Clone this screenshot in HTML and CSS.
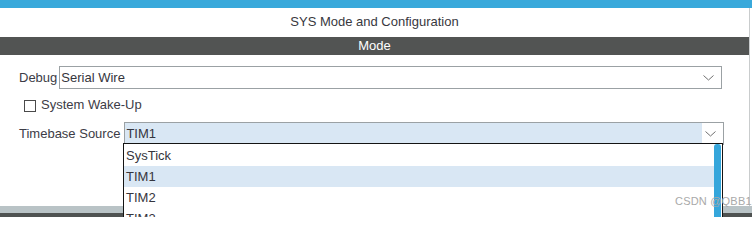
FILE: index.html
```html
<!DOCTYPE html>
<html>
<head>
<meta charset="utf-8">
<link rel="stylesheet" href="styles.css">
</head>
<body>
<div class="topbar"></div>
<div class="panel">
  <div class="title">SYS Mode and Configuration</div>
  <div class="modebar">Mode</div>
  <div class="form">
    <div class="row row-debug">
      <span class="label">Debug</span>
      <div class="select select-debug">
        <span class="value">Serial Wire</span>
        <span class="arrow"><svg width="11" height="6" viewBox="0 0 11 6"><path d="M0.5 0.5 L5.5 5 L10.5 0.5" fill="none" stroke="#707070" stroke-width="1"/></svg></span>
      </div>
    </div>
    <div class="row row-check">
      <span class="checkbox"></span>
      <span class="check-label">System Wake-Up</span>
    </div>
    <div class="row row-time">
      <span class="label">Timebase Source</span>
      <div class="select select-time">
        <span class="value">TIM1</span>
        <span class="arrow arrow-white"><svg width="11" height="6" viewBox="0 0 11 6"><path d="M0.5 0.5 L5.5 5 L10.5 0.5" fill="none" stroke="#707070" stroke-width="1"/></svg></span>
      </div>
    </div>
  </div>
</div>
<div class="bottom">
  <div class="band-light"></div>
  <div class="band-dark"></div>
</div>
<div class="dropdown">
  <div class="items">
    <div class="item">SysTick</div>
    <div class="item selected">TIM1</div>
    <div class="item">TIM2</div>
    <div class="item">TIM3</div>
  </div>
  <div class="scrollbar"></div>
</div>
<div class="watermark">CSDN @QBB1</div>
</body>
</html>
```
FILE: styles.css
```css
html, body {
  margin: 0;
  padding: 0;
  width: 752px;
  height: 217px;
  overflow: hidden;
  background: #ffffff;
  font-family: "Liberation Sans", Arial, sans-serif;
  font-size: 13px;
  color: #3c3c46;
}
body {
  position: relative;
}
.topbar {
  height: 8px;
  background: #39a9db;
}
.panel {
  width: 749px;
  height: 198px;
  border-right: 1px solid #c9cccd;
}
.title {
  height: 29px;
  line-height: 28px;
  text-align: center;
  color: #38383e;
}
.modebar {
  height: 18px;
  line-height: 18px;
  background: #525453;
  color: #ffffff;
  text-align: center;
}
.form {
  padding-left: 19px;
  padding-top: 11px;
}
.row {
  display: flex;
  align-items: center;
}
.row-debug {
  height: 22px;
}
.label {
  white-space: nowrap;
}
.select {
  box-sizing: border-box;
  height: 23px;
  border: 1px solid #9ba1a4;
  display: flex;
  align-items: center;
  justify-content: space-between;
  background: #ffffff;
}
.select-debug {
  margin-left: 2px;
  width: 663px;
}
.select-time {
  margin-left: 4px;
  width: 600px;
  background: #d9e7f4;
}
.value {
  padding-left: 1px;
  color: #35353d;
}
.arrow {
  width: 21px;
  height: 21px;
  display: flex;
  align-items: center;
  justify-content: center;
  padding-right: 4px;
  box-sizing: border-box;
}
.arrow svg {
  display: block;
  margin-top: 1px;
}
.arrow-white {
  background: #ffffff;
}
.row-check {
  height: 12px;
  margin-top: 12px;
  padding-left: 5px;
}
.checkbox {
  box-sizing: border-box;
  width: 12px;
  height: 12px;
  border: 1px solid #4a4a4a;
  background: #ffffff;
}
.check-label {
  margin-left: 5px;
  margin-top: -4px;
}
.row-time {
  margin-top: 10px;
  height: 23px;
}
.bottom {
  width: 752px;
}
.band-light {
  height: 7px;
  background: #b9c3c6;
}
.band-dark {
  height: 4px;
  background: #4f5251;
}
.dropdown {
  position: absolute;
  left: 123px;
  top: 143px;
  width: 600px;
  height: 74px;
  overflow: hidden;
  box-sizing: border-box;
  border: 1px solid #141414;
  border-bottom: none;
  background: #ffffff;
  display: flex;
}
.items {
  flex: 1;
  padding-top: 1px;
}
.item {
  height: 21px;
  line-height: 21px;
  padding-left: 2px;
  color: #35353d;
}
.item.selected {
  background: #d9e7f4;
}
.scrollbar {
  width: 7px;
  margin-right: 1px;
  background: #35a6db;
  border-radius: 3px 3px 0 0;
}
.watermark {
  position: absolute;
  left: 675px;
  top: 195px;
  font-size: 11px;
  color: #a9a9a9;
  letter-spacing: 0.2px;
}
```
